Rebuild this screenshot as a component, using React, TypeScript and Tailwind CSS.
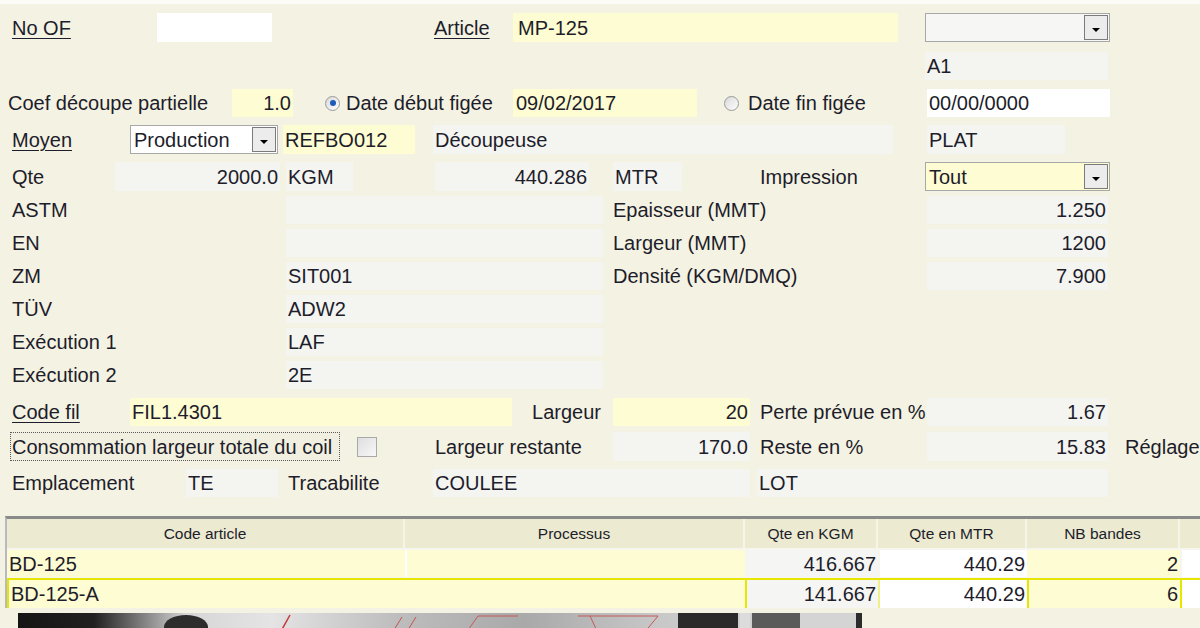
import type { ReactNode } from 'react'

const YEL = 'bg-[#fdfcd2]'
const GRY = 'bg-[#f4f4f1]'

function Fld({ className, right, children }: { className: string; right?: boolean; children?: ReactNode }) {
  return (
    <div
      className={`flex h-full shrink-0 items-center overflow-hidden whitespace-nowrap px-[2px] ${right ? 'justify-end' : ''} ${className}`}
    >
      {children}
    </div>
  )
}

function Lbl({ className, u, children }: { className: string; u?: boolean; children?: ReactNode }) {
  return (
    <div className={`shrink-0 whitespace-nowrap ${u ? 'underline decoration-1 underline-offset-[3px]' : ''} ${className}`}>
      {children}
    </div>
  )
}

function Combo({ className, value }: { className: string; value?: string }) {
  return (
    <div className={`flex h-full shrink-0 items-stretch border border-[#a8a8a8] ${className}`}>
      <div className="flex flex-1 items-center px-[3px]">{value}</div>
      <div className="m-[1px] flex w-[24px] items-center justify-center border border-[#7b7b7b] bg-[#ececec] pt-[4px]">
        <div className="h-0 w-0 border-x-[4px] border-t-[4px] border-x-transparent border-t-black" />
      </div>
    </div>
  )
}

function Radio({ className, on }: { className: string; on?: boolean }) {
  return (
    <div
      className={`flex h-[15px] w-[15px] shrink-0 items-center justify-center rounded-full border border-[#9a9a9a] bg-linear-to-br from-[#d9d9d9] to-white ${className}`}
    >
      {on && <div className="h-[6px] w-[6px] rounded-full bg-[#1d5bb8]" />}
    </div>
  )
}

function Row({ className, children }: { className: string; children: ReactNode }) {
  return <div className={`flex h-[28px] items-center overflow-hidden ${className}`}>{children}</div>
}

const specRows: { label: string; value: string; label2?: string; value2?: string }[] = [
  { label: 'ASTM', value: '', label2: 'Epaisseur (MMT)', value2: '1.250' },
  { label: 'EN', value: '', label2: 'Largeur (MMT)', value2: '1200' },
  { label: 'ZM', value: 'SIT001', label2: 'Densité (KGM/DMQ)', value2: '7.900' },
  { label: 'TÜV', value: 'ADW2' },
  { label: 'Exécution 1', value: 'LAF' },
  { label: 'Exécution 2', value: '2E' },
]

function MachinePhoto() {
  return (
    <svg width="844" height="20" viewBox="0 0 844 20" className="block">
      <defs>
        <linearGradient id="g1" x1="0" x2="1">
          <stop offset="0" stopColor="#151515" />
          <stop offset="0.09" stopColor="#202020" />
          <stop offset="0.2" stopColor="#d6d6d6" />
          <stop offset="0.3" stopColor="#e4e4e4" />
          <stop offset="0.45" stopColor="#bdbdbd" />
          <stop offset="0.6" stopColor="#a9a9a9" />
          <stop offset="0.76" stopColor="#c8c8c8" />
          <stop offset="1" stopColor="#d9d9d9" />
        </linearGradient>
      </defs>
      <rect width="844" height="20" fill="url(#g1)" />
      <ellipse cx="168" cy="14" rx="22" ry="12" fill="#2d2d2d" />
      <path d="M262 20 L272 2" stroke="#c23a3a" strokeWidth="1.5" />
      <path d="M374 20 L384 4 M388 20 L398 4" stroke="#c85050" strokeWidth="1" />
      <path d="M448 20 L460 3 L500 3" stroke="#c65a5a" strokeWidth="1" fill="none" />
      <path d="M560 3 L640 3 L626 20 M572 3 L580 20" stroke="#c65a5a" strokeWidth="1" fill="none" />
      <rect x="660" y="0" width="60" height="20" fill="#2a2a2a" />
      <rect x="722" y="0" width="10" height="20" fill="#dcdcdc" />
      <rect x="734" y="0" width="48" height="20" fill="#5a5a5a" />
      <rect x="784" y="0" width="56" height="20" fill="#d4d4d4" />
      <rect x="838" y="0" width="6" height="20" fill="#2b2b2b" />
    </svg>
  )
}

export default function App() {
  return (
    <div className="h-[628px] w-[1200px] overflow-hidden border-t-[4px] border-[#fbfbf7] bg-[#f4f2e2] font-['Liberation_Sans',Arial,sans-serif] text-[20px] leading-none text-[#1d1d2b]">
      {/* En-tête OF */}
      <Row className="mt-[9px] h-[29px]">
        <Lbl u className="ml-[12px] w-[145px]">No OF</Lbl>
        <Fld className="w-[115px] bg-white" />
        <Lbl u className="ml-[162px] w-[79px]">Article</Lbl>
        <Fld className={`w-[385px] pl-[5px] ${YEL}`}>MP-125</Fld>
        <Combo className="ml-[27px] w-[185px] bg-[#f6f6f4]" />
      </Row>

      <Row className="mt-[10px]">
        <Fld className={`ml-[925px] w-[183px] ${GRY}`}>A1</Fld>
      </Row>

      <Row className="mt-[9px]">
        <Lbl className="ml-[8px] w-[224px]">Coef découpe partielle</Lbl>
        <Fld right className={`w-[61px] ${YEL}`}>1.0</Fld>
        <Radio on className="ml-[32px]" />
        <Lbl className="ml-[6px] w-[167px]">Date début figée</Lbl>
        <Fld className={`w-[184px] pl-[3px] ${YEL}`}>09/02/2017</Fld>
        <Radio className="ml-[27px]" />
        <Lbl className="ml-[9px] w-[179px]">Date fin figée</Lbl>
        <Fld className="w-[183px] bg-white">00/00/0000</Fld>
      </Row>

      <Row className="mt-[8px] h-[29px]">
        <Lbl u className="ml-[12px] w-[118px]">Moyen</Lbl>
        <Combo className="w-[148px] bg-white" value="Production" />
        <Fld className={`ml-[5px] w-[132px] ${YEL}`}>REFBO012</Fld>
        <Fld className={`ml-[18px] w-[460px] ${GRY}`}>Découpeuse</Fld>
        <Fld className={`ml-[34px] w-[138px] ${GRY}`}>PLAT</Fld>
      </Row>

      <Row className="mt-[8px] h-[29px]">
        <Lbl className="ml-[12px] w-[103px]">Qte</Lbl>
        <Fld right className={`w-[165px] ${GRY}`}>2000.0</Fld>
        <Fld className={`ml-[6px] w-[67px] ${GRY}`}>KGM</Fld>
        <Fld right className={`ml-[82px] w-[154px] ${GRY}`}>440.286</Fld>
        <Fld className={`ml-[24px] w-[69px] ${GRY}`}>MTR</Fld>
        <Lbl className="ml-[78px] w-[165px]">Impression</Lbl>
        <Combo className={`w-[185px] ${YEL}`} value="Tout" />
      </Row>

      {specRows.map((r) => (
        <Row key={r.label} className="mt-[5px]">
          <Lbl className="ml-[12px] w-[274px]">{r.label}</Lbl>
          <Fld className={`w-[317px] ${GRY}`}>{r.value}</Fld>
          {r.label2 && (
            <>
              <Lbl className="ml-[10px] w-[314px]">{r.label2}</Lbl>
              <Fld right className={`w-[181px] ${GRY}`}>{r.value2}</Fld>
            </>
          )}
        </Row>
      ))}

      {/* Fil / coil */}
      <Row className="mt-[9px]">
        <Lbl u className="ml-[12px] w-[118px]">Code fil</Lbl>
        <Fld className={`w-[382px] ${YEL}`}>FIL1.4301</Fld>
        <Lbl className="w-[101px] pr-[12px] text-right">Largeur</Lbl>
        <Fld right className={`w-[137px] ${YEL}`}>20</Fld>
        <Lbl className="ml-[10px] w-[167px]">Perte prévue en %</Lbl>
        <Fld right className={`w-[181px] ${GRY}`}>1.67</Fld>
      </Row>

      <Row className="mt-[6px] h-[29px]">
        <div className="ml-[10px] flex h-full w-[330px] shrink-0 items-center whitespace-nowrap border border-dotted border-[#5a5a5a] bg-[#f1efdf] px-[1px]">
          Consommation largeur totale du coil
        </div>
        <div className="ml-[17px] h-[20px] w-[20px] shrink-0 border border-[#a9a9a9] bg-linear-to-br from-[#dedede] to-[#f8f8f8]" />
        <Lbl className="ml-[58px] w-[178px]">Largeur restante</Lbl>
        <Fld right className={`w-[137px] ${GRY}`}>170.0</Fld>
        <Lbl className="ml-[10px] w-[167px]">Reste en %</Lbl>
        <Fld right className={`w-[181px] ${GRY}`}>15.83</Fld>
        <Lbl className="ml-[17px]">Réglage</Lbl>
      </Row>

      <Row className="mt-[8px]">
        <Lbl className="ml-[12px] w-[174px]">Emplacement</Lbl>
        <Fld className={`w-[92px] ${GRY}`}>TE</Fld>
        <Lbl className="ml-[10px] w-[145px]">Tracabilite</Lbl>
        <Fld className={`w-[317px] ${GRY}`}>COULEE</Fld>
        <Fld className={`ml-[7px] w-[351px] ${GRY}`}>LOT</Fld>
      </Row>

      {/* Grille des bandes */}
      <div className="ml-[5px] mt-[19px] border-l-[2px] border-t-[3px] border-l-[#b8b9c2] border-t-[#8a8a8a] bg-[#f7f6ee]">
        <div className="flex h-[29px] bg-[#ecead0] text-[15.5px]">
          <div className="flex w-[398px] shrink-0 items-center justify-center border-r-2 border-[#f6f5e8]">Code article</div>
          <div className="flex w-[340px] shrink-0 items-center justify-center border-r-2 border-[#f6f5e8]">Processus</div>
          <div className="flex w-[133px] shrink-0 items-center justify-center border-r-2 border-[#f6f5e8]">Qte en KGM</div>
          <div className="flex w-[149px] shrink-0 items-center justify-center border-r-2 border-[#f6f5e8]">Qte en MTR</div>
          <div className="flex w-[153px] shrink-0 items-center justify-center border-r-2 border-[#f6f5e8]">NB bandes</div>
          <div className="flex-1" />
        </div>

        <div className="mt-[2px] flex h-[27px]">
          <Fld className={`w-[398px] ${YEL}`}>BD-125</Fld>
          <Fld className={`w-[340px] border-l-2 border-white ${YEL}`} />
          <Fld right className="w-[133px] bg-[#f5f5f3]">416.667</Fld>
          <Fld right className="w-[149px] border-l-2 border-[#f6f5ee] bg-white">440.29</Fld>
          <Fld right className={`w-[153px] ${YEL}`}>2</Fld>
          <div className="flex-1 border-l-2 border-[#f6f5ee] bg-white" />
        </div>

        <div className="mt-[1px] flex h-[30px] border-t-[2px] border-[#e6e600]">
          <Fld className={`w-[398px] border-l-2 border-[#e6e600] ${YEL}`}>BD-125-A</Fld>
          <Fld className={`w-[340px] ${YEL}`} />
          <Fld right className="w-[133px] border-l-2 border-[#e6e600] bg-[#f5f5f3]">141.667</Fld>
          <Fld right className="w-[149px] border-l-2 border-[#f0f08a] bg-white">440.29</Fld>
          <Fld right className={`w-[153px] border-l-2 border-[#e6e600] ${YEL}`}>6</Fld>
          <div className="flex-1 border-l-2 border-[#e6e600] bg-white" />
        </div>
      </div>

      <div className="ml-[18px] mt-[5px]">
        <MachinePhoto />
      </div>
    </div>
  )
}
